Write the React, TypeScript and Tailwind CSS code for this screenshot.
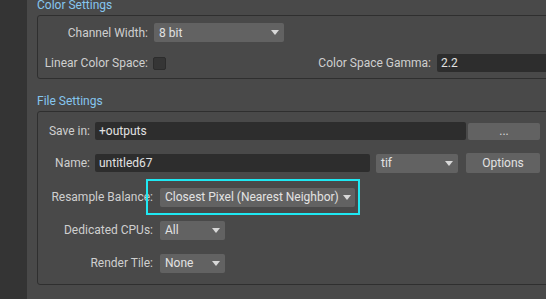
import React from 'react'

const font = { fontFamily: 'Roboto, "Noto Sans", sans-serif' }

function Arrow() {
	return (
		<svg width="8" height="5" viewBox="0 0 8 5" className="ml-[4px] shrink-0">
			<path d="M0 0h8L4 5z" fill="#d8d8d8" />
		</svg>
	)
}

function Dropdown({ value, className }: { value: string; className: string }) {
	return (
		<div className={`flex items-center justify-between rounded-[2px] bg-[#626262] pl-[5px] pr-[5px] text-[#e2e2e2] ${className}`}>
			<span className="whitespace-nowrap">{value}</span>
			<Arrow />
		</div>
	)
}

function Field({ value, className }: { value: string; className: string }) {
	return (
		<div className={`flex items-center rounded-[2px] bg-[#2d2d2d] px-[4px] text-[#e2e2e2] ${className}`}>{value}</div>
	)
}

function Label({ text, className }: { text: string; className: string }) {
	return <div className={`shrink-0 whitespace-nowrap text-right text-[#cfcfcf] ${className}`}>{text}</div>
}

export default function App() {
	return (
		<div className="flex h-[299px] w-[546px] overflow-hidden text-[12px] leading-[16px]" style={font}>
			<div className="w-[27px] shrink-0 bg-[#343434]" />
			<div className="flex-1 bg-[#494949] pl-[10px]">
				{/* Color settings */}
				<div className="mt-[-3px] h-[18px] text-[#86c6ef]">Color Settings</div>
				<div className="mr-[-10px] h-[64px] rounded-[3px] border border-[#2f2f2f] pt-[7px]">
					<div className="flex h-[19px] items-center">
						<Label text="Channel Width:" className="w-[110px]" />
						<Dropdown value="8 bit" className="ml-[6px] h-[19px] w-[130px]" />
					</div>
					<div className="mt-[11px] flex h-[20px] items-center">
						<Label text="Linear Color Space:" className="w-[110px]" />
						<div className="ml-[5px] h-[13px] w-[13px] rounded-[2px] border border-[#2c2c2c] bg-[#353535]" />
						<Label text="Color Space Gamma:" className="ml-[150px] w-[115px]" />
						<Field value="2.2" className="ml-[6px] h-[18px] flex-1" />
					</div>
				</div>

				{/* File settings */}
				<div className="mt-[14px] h-[18px] text-[#86c6ef]">File Settings</div>
				<div className="relative mr-[-10px] h-[174px] rounded-[3px] border border-[#2f2f2f] pt-[9px]">
					<div className="flex h-[20px] items-center">
						<Label text="Save in:" className="w-[52px]" />
						<Field value="+outputs" className="ml-[5px] h-[18px] w-[371px]" />
						<div className="ml-[2px] flex h-[17px] w-[72px] items-center justify-center rounded-[2px] bg-[#626262] text-[#d8d8d8]">
							...
						</div>
					</div>
					<div className="mt-[12px] flex h-[20px] items-center">
						<Label text="Name:" className="w-[52px]" />
						<Field value="untitled67" className="ml-[5px] h-[18px] w-[275px]" />
						<Dropdown value="tif" className="ml-[6px] h-[19px] w-[82px]" />
						<div className="ml-[8px] flex h-[20px] w-[74px] items-center justify-center rounded-[2px] bg-[#626262] text-[#e2e2e2]">
							Options
						</div>
					</div>
					<div className="mt-[14px] flex h-[20px] items-center">
						<Label text="Resample Balance:" className="w-[115px]" />
						<Dropdown value="Closest Pixel (Nearest Neighbor)" className="ml-[7px] h-[19px] w-[195px]" />
					</div>
					<div className="mt-[13px] flex h-[20px] items-center">
						<Label text="Dedicated CPUs:" className="w-[115px]" />
						<Dropdown value="All" className="ml-[7px] h-[19px] w-[65px]" />
					</div>
					<div className="mt-[13px] flex h-[20px] items-center">
						<Label text="Render Tile:" className="w-[115px]" />
						<Dropdown value="None" className="ml-[7px] h-[19px] w-[65px]" />
					</div>
					<div className="pointer-events-none absolute left-[108px] top-[67px] h-[36px] w-[214px] border-2 border-[#1fe8f2]" />
				</div>
			</div>
		</div>
	)
}
